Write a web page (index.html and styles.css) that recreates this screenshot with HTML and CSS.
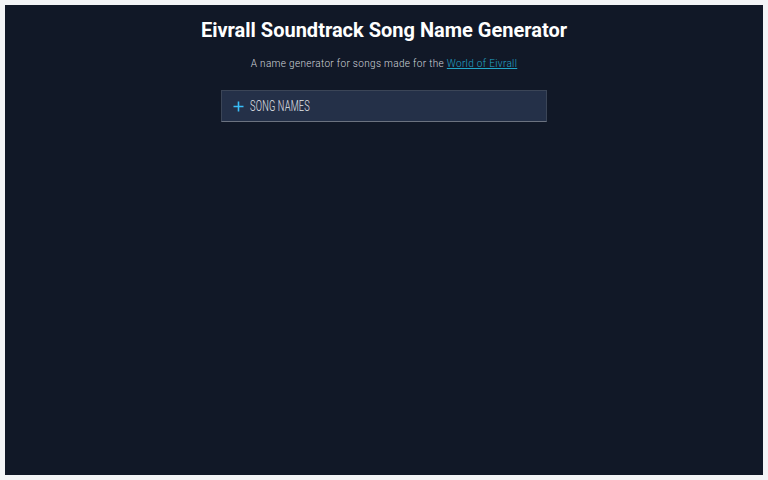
FILE: index.html
```html
<!DOCTYPE html>
<html lang="en">
<head>
<meta charset="utf-8">
<title>Eivrall Soundtrack Song Name Generator</title>
<link rel="stylesheet" href="styles.css">
</head>
<body>
<main class="page">
  <h1 class="title">Eivrall Soundtrack Song Name Generator</h1>
  <p class="subtitle">A name generator for songs made for the <a href="#" class="link">World of Eivrall</a></p>
  <section class="accordion">
    <button class="accordion-head" type="button">
      <svg class="plus" width="11" height="11" viewBox="0 0 11 11" aria-hidden="true">
        <path d="M5.5 0.5v10M0.5 5.5h10" stroke="currentColor" stroke-width="1.6" fill="none"/>
      </svg>
      <span class="accordion-label">SONG NAMES</span>
    </button>
  </section>
</main>
</body>
</html>
```
FILE: styles.css
```css
html, body {
  margin: 0;
  padding: 0;
}

body {
  background: #f3f4f6;
  padding: 5px;
  height: 480px;
  box-sizing: border-box;
  font-family: Roboto, "Liberation Sans", sans-serif;
}

.page {
  background: #111827;
  height: 100%;
  display: flex;
  flex-direction: column;
  align-items: center;
  padding-top: 12px;
  box-sizing: border-box;
}

.title {
  margin: 0;
  color: #ffffff;
  font-size: 20px;
  font-weight: 700;
  line-height: 26px;
}

.subtitle {
  margin: 15px 0 0;
  color: #d1d5db;
  font-size: 10px;
  font-weight: 300;
  letter-spacing: 0.33px;
  line-height: 12px;
}

.link {
  color: #22a7c9;
  text-decoration: underline;
}

.accordion {
  margin-top: 20px;
  width: 326px;
  box-sizing: border-box;
  background: #243048;
  border: 1px solid #3b4557;
  border-bottom-color: #6b7280;
}

.accordion-head {
  display: flex;
  align-items: center;
  gap: 6px;
  width: 100%;
  height: 30px;
  padding: 0 0 0 11px;
  background: none;
  border: 0;
  color: #e5e7eb;
  cursor: pointer;
}

.plus {
  color: #38bdf8;
}

.accordion-label {
  display: inline-block;
  font-family: Roboto, "Liberation Sans", sans-serif;
  font-size: 14px;
  font-weight: 300;
  letter-spacing: 0.3px;
  transform: scaleX(0.66);
  transform-origin: left center;
}
```
